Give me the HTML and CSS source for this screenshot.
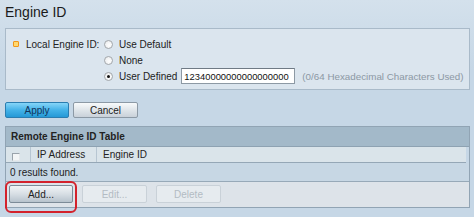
FILE: index.html
```html
<!DOCTYPE html>
<html lang="en">
<head>
  <meta charset="UTF-8" />
  <title>Engine ID</title>
  <link rel="stylesheet" href="styles.css">
</head>
<body>

  <h1>Engine ID</h1>

  <div class="panel">
    <div class="field">
      <div class="field-label"><span class="req"></span>Local Engine ID:</div>
      <div class="options">
        <label class="opt"><input type="radio" name="eid"> Use Default</label>
        <label class="opt"><input type="radio" name="eid"> None</label>
        <label class="opt"><input type="radio" name="eid" checked> User Defined
          <input type="text" class="eid-input" value="12340000000000000000">
          <span class="hint">(0/64 Hexadecimal Characters Used)</span>
        </label>
      </div>
    </div>
  </div>

  <div class="actions">
    <button class="btn btn-primary">Apply</button>
    <button class="btn">Cancel</button>
  </div>

  <!-- Remote table -->
  <div class="table-box">
    <div class="table-title">Remote Engine ID Table</div>
    <div class="col-row">
      <div class="col col-check"><span class="checkbox"></span></div>
      <div class="col col-ip">IP Address</div>
      <div class="col">Engine ID</div>
    </div>
    <div class="results">0 results found.</div>
    <div class="table-actions">
      <span class="marked"><button class="btn btn-add">Add...</button></span>
      <button class="btn" disabled>Edit...</button>
      <button class="btn" disabled>Delete</button>
    </div>
  </div>

</body>
</html>
```

FILE: styles.css
```css
* { box-sizing: border-box; margin: 0; padding: 0; }

body {
  width: 474px;
  height: 217px;
  overflow: hidden;
  font-family: "Liberation Sans", Arial, sans-serif;
  font-size: 10px;
  color: #222;
  background: linear-gradient(#d4e1ec, #c6d7e6 70px);
}

h1 {
  font-size: 14px;
  font-weight: normal;
  line-height: 16px;
  height: 28px;
  padding: 4px 0 0 5px;
  color: #1a1a1a;
}

.panel {
  margin: 0 4px 0 5px;
  height: 62px;
  padding: 7px 0 0 7px;
  background: #dbe5ee;
  border: 1px solid #a9bac9;
}

.field {
  display: flex;
}

.field-label {
  width: 91px;
  height: 16px;
  display: flex;
  align-items: center;
}

.req {
  width: 6px;
  height: 6px;
  margin-right: 7px;
  border-radius: 1px;
  border: 1.5px solid #f0961c;
  background: #ffd86e;
}

.options {
  display: flex;
  flex-direction: column;
}

.opt {
  height: 16px;
  display: flex;
  align-items: center;
}

.opt input[type="radio"] {
  appearance: none;
  width: 9px;
  height: 9px;
  margin-right: 6px;
  border-radius: 50%;
  border: 1px solid #a3a7ab;
  background: radial-gradient(circle at 60% 60%, #ffffff, #e6e8ea);
  position: relative;
}

.opt input[type="radio"]:checked::after {
  content: "";
  position: absolute;
  left: 2px;
  top: 2px;
  width: 3px;
  height: 3px;
  border-radius: 50%;
  background: #111;
}

.eid-input {
  margin-left: 4px;
  width: 114px;
  height: 16px;
  padding: 0 2px;
  border: 1px solid #8d99a4;
  border-top-color: #6f7a85;
  background: #fff;
  font-family: "Liberation Sans", Arial, sans-serif;
  font-size: 9.4px;
  color: #111;
}

.hint {
  margin-left: 7px;
  font-size: 9.8px;
  color: #8c98a4;
}

.actions {
  display: flex;
  gap: 4px;
  margin: 12px 0 0 5px;
}

.btn {
  width: 65px;
  height: 16px;
  font-family: "Liberation Sans", Arial, sans-serif;
  font-size: 10px;
  color: #222;
  border: 1px solid #8c99a5;
  border-radius: 2px;
  background: linear-gradient(#f8fafb, #dfe5ea 50%, #c9d1d9);
}

.btn-primary {
  width: 64px;
  color: #12345a;
  border-color: #2a7db0;
  background: linear-gradient(#86d5f8, #44b2e8 50%, #2599d6);
}

.btn:disabled {
  color: #b3bbc3;
  border-color: #c9d1d8;
  background: #e6ebef;
}

.table-box {
  margin: 8px 4px 0 5px;
  border: 1px solid #91a4b4;
}

.table-title {
  height: 20px;
  line-height: 20px;
  padding-left: 5px;
  font-weight: bold;
  background: #a3b9c9;
  border-bottom: 1px solid #8ea2b2;
}

.col-row {
  display: flex;
  height: 16px;
  margin-right: 3px;
  background: #dae4ea;
  border-bottom: 1px solid #95a7b6;
}

.col {
  display: flex;
  align-items: center;
  padding-left: 6px;
}

.col-check {
  width: 25px;
  border-right: 1px solid #b7c6d2;
  align-items: flex-end;
  padding-bottom: 1px;
}

.col-ip {
  width: 66px;
  border-right: 1px solid #b7c6d2;
}

.checkbox {
  width: 8px;
  height: 8px;
  border: 1px solid #9aa3ab;
  border-right-color: #e4e8eb;
  border-bottom-color: #e4e8eb;
  background: #f3f5f6;
}

.results {
  height: 19px;
  line-height: 19px;
  padding-left: 4px;
  background: #c7d7e4;
  border-bottom: 1px solid #97a9b8;
}

.table-actions {
  display: flex;
  gap: 9px;
  height: 25px;
  padding: 3px 0 0 3px;
  background: #dde3e9;
}

.table-actions .btn {
  height: 18px;
}

.btn-add {
  width: 64px;
  border-color: #7c8b98;
  background: linear-gradient(#f1f4f6, #d7dee4 50%, #b7c3cd);
}

/* red highlight around Add */
.marked {
  position: relative;
  display: flex;
}

.marked::after {
  content: "";
  position: absolute;
  left: -4px;
  right: -4px;
  top: -4px;
  bottom: -6px;
  border: 2px solid #d3222c;
  border-radius: 6px;
}
```
